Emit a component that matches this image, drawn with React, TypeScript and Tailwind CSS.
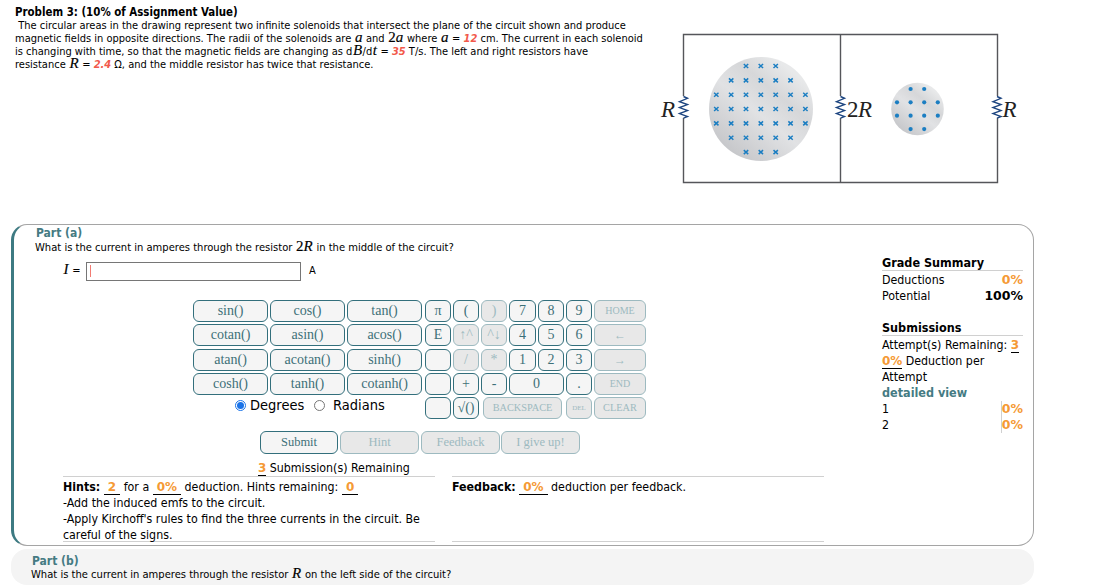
import React from "react";

function M({ children }: { children: React.ReactNode }) {
  return <span className="px-[0.5px] font-['Liberation_Serif',serif] text-[15px] leading-[0] italic [-webkit-text-stroke:0.15px_black]">{children}</span>;
}

function Red({ children }: { children: React.ReactNode }) {
  return <span className="font-bold italic text-[#f2594b]">{children}</span>;
}

function Amber({ children }: { children: React.ReactNode }) {
  return <span className="border-b border-black font-['DejaVu_Sans',sans-serif] text-[12px] leading-none font-bold tracking-[-0.1px] text-[#f59a35] [font-stretch:normal]">{children}</span>;
}

function Percent({ children, className = "text-[#f59a35]" }: { children: React.ReactNode; className?: string }) {
  return <b className={`font-['DejaVu_Sans',sans-serif] text-[12.5px] [font-stretch:normal] ${className}`}>{children}</b>;
}

function Key({ label = "", w = "w-[26px]", off = false, text = "text-[14px]" }: { label?: string; w?: string; off?: boolean; text?: string }) {
  return (
    <div
      className={`flex h-[22px] shrink-0 items-center justify-center overflow-hidden rounded-[6px] border whitespace-pre font-['Liberation_Serif',serif] leading-none ${w} ${text} ${
        off ? "border-[#9dbac0] bg-[#e8e8e8] text-[#9dbac0]" : "border-[#336f7c] bg-[#f5f5f5] text-[#3d7078]"
      }`}
    >
      {label}
    </div>
  );
}

function Resistor({ x }: { x: number }) {
  return <path d={`M${x} 66.5l4 1.8-8 3.3 8 3-8 3 8 3-8 3 8 3-4 1.6`} fill="none" stroke="#1d4580" strokeWidth="1.4" />;
}

const crosses = [
  [2, 3, 4],
  [1, 2, 3, 4, 5],
  [0, 1, 2, 3, 4, 5, 6],
  [0, 1, 2, 3, 4, 5, 6],
  [0, 1, 2, 3, 4, 5, 6],
  [1, 2, 3, 4, 5],
  [2, 3, 4],
];
const dots = [[1, 2], [0, 1, 2, 3], [0, 1, 2, 3], [1, 2]];

function Circuit() {
  return (
    <svg width="370" height="170" viewBox="0 0 370 170" className="block">
      <defs>
        <linearGradient id="ball" x1="0.1" y1="0.9" x2="0.75" y2="0.1">
          <stop offset="0" stopColor="#c3c4c7" />
          <stop offset="0.5" stopColor="#e1e2e4" />
          <stop offset="0.75" stopColor="#d6d7d9" />
          <stop offset="1" stopColor="#e8e9ea" />
        </linearGradient>
      </defs>
      <path
        d="M23.5 66V4.5H337.5V66M23.5 88V152.5H337.5V88M180.5 4.5V66M180.5 88V152.5"
        fill="none"
        stroke="#55565a"
        strokeWidth="1.4"
      />
      <Resistor x={23.5} />
      <Resistor x={180.5} />
      <Resistor x={337} />
      <circle cx="101" cy="79" r="52" fill="url(#ball)" />
      <circle cx="257.5" cy="79" r="26.3" fill="url(#ball)" />
      {crosses.map((row, r) =>
        row.map((c) => {
          const x = 56.3 + c * 14.85;
          const y = 36 + r * 14.35;
          return <path key={`${r}-${c}`} d={`M${x - 2.2} ${y - 2}l4.4 4m0-4l-4.4 4`} stroke="#1b7ec2" strokeWidth="1.5" />;
        }),
      )}
      {dots.map((row, r) =>
        row.map((c) => <circle key={`${r}-${c}`} cx={237 + c * 13.6} cy={59 + r * 13.35} r="2.1" fill="#1b7ec2" />),
      )}
      <g fontFamily="Liberation Serif, serif" fontSize="23" fill="#222">
        <text x="1" y="86.5" fontStyle="italic">R</text>
        <text x="187" y="86.5" textLength="25">2<tspan fontStyle="italic">R</tspan></text>
        <text x="342.5" y="86.5" fontStyle="italic">R</text>
      </g>
    </svg>
  );
}

const fn = [
  ["sin()", "cos()", "tan()"],
  ["cotan()", "asin()", "acos()"],
  ["atan()", "acotan()", "sinh()"],
  ["cosh()", "tanh()", "cotanh()"],
];

export default function App() {
  return (
    <div className="h-[588px] w-[1096px] overflow-hidden bg-white pl-[11px] font-['DejaVu_Sans_Condensed','DejaVu_Sans',sans-serif] text-[12.3px] text-black [font-stretch:condensed]">
      <header className="flex h-[224px] pl-[3px]">
        <div className="w-[646px] shrink-0 pt-[6px] pl-px text-[11px] leading-[13px] whitespace-pre [&>div]:h-[13px]">
          <div className="text-[11.4px]"><b>Problem 3: (10% of Assignment Value)</b></div>
          <div> The circular areas in the drawing represent two infinite solenoids that intersect the plane of the circuit shown and produce</div>
          <div>magnetic fields in opposite directions. The radii of the solenoids are <M>a</M> and <M><span className="not-italic">2</span>a</M> where <M>a</M> = <Red>12</Red> cm. The current in each solenoid</div>
          <div>is changing with time, so that the magnetic fields are changing as d<M>B</M>/d<M>t</M> = <Red>35</Red> T/s. The left and right resistors have</div>
          <div>resistance <M>R</M> = <Red>2.4</Red> Ω, and the middle resistor has twice that resistance.</div>
        </div>
        <div className="pt-[30px]"><Circuit /></div>
      </header>

      <section className="flex h-[322px] w-[1023px] rounded-[16px] border border-l-[3px] border-[#a5a5a5] border-l-[#3d7a82] pl-px whitespace-pre">
        <div className="w-[868px] shrink-0 pt-[1px]">
          <div className="ml-[21px] h-[15px] text-[12px] leading-[15px] font-bold text-[#457b83]">Part (a)</div>
          <div className="ml-[20px] h-[15px] text-[11.1px] leading-[13px]">What is the current in amperes through the resistor <M><span className="not-italic">2</span>R</M> in the middle of the circuit?</div>
          <div className="mt-[5px] ml-[48px] flex h-[20px] items-center">
            <span className="w-[23px] text-[11px]"><M>I</M> =</span>
            <div className="flex h-[19px] w-[215px] items-center border border-[#767676] pl-[3px]"><span className="h-[12px] w-px bg-[#f27b72]" /></div>
            <span className="ml-[8px] text-[11px]">A</span>
          </div>

          <div className="mt-[19px] ml-[178px] flex gap-[3px]">
            <div className="w-[229px]">
              <div className="flex flex-col gap-[2.3px]">
                {fn.map((row) => (
                  <div key={row[0]} className="flex gap-[2px]">
                    {row.map((f) => <Key key={f} label={f} w="w-[75px]" />)}
                  </div>
                ))}
              </div>
              <div className="mt-[2px] ml-[42px] flex h-[18px] items-center text-[14.5px]">
                <span className="flex size-[11px] items-center justify-center rounded-full border border-[#1a73e8]"><span className="size-[7px] rounded-full bg-[#1a73e8]" /></span>
                <span className="ml-[4px] w-[64px]">Degrees</span>
                <span className="size-[11px] rounded-full border border-[#767676]" />
                <span className="ml-[8px]">Radians</span>
              </div>
            </div>
            <div className="flex flex-col gap-[2.3px] [&>div]:flex [&>div]:gap-[2px]">
              <div><Key label="π" /><Key label="(" /><Key label=")" off /><Key label="7" w="w-[27px]" /><Key label="8" /><Key label="9" /><Key label="HOME" off w="w-[52px]" text="text-[10px]" /></div>
              <div><Key label="E" /><Key label="↑^" off /><Key label="^↓" off /><Key label="4" w="w-[27px]" /><Key label="5" /><Key label="6" /><Key label="←" off w="w-[52px]" text="text-[12px]" /></div>
              <div><Key /><Key label="/" off /><Key label="*" off /><Key label="1" w="w-[27px]" /><Key label="2" /><Key label="3" /><Key label="→" off w="w-[52px]" text="text-[12px]" /></div>
              <div><Key /><Key label="+" /><Key label="-" /><Key label="0" w="w-[55px]" /><Key label="." /><Key label="END" off w="w-[52px]" text="text-[10px]" /></div>
              <div><Key /><Key label="√()" /><Key label="BACKSPACE" off w="ml-[2px] w-[79px]" text="text-[10.3px]" /><Key label="DEL" off w="ml-[2px] w-[26px]" text="text-[7px]" /><Key label="CLEAR" off w="w-[52px]" text="text-[10.3px]" /></div>
            </div>
          </div>

          <div className="mt-[12px] ml-[245px] flex gap-[2px] [&>div]:h-[23px]">
            <Key label="Submit" w="w-[78px]" text="text-[12.5px]" />
            <Key label="Hint" off w="w-[79px]" text="text-[12.5px]" />
            <Key label="Feedback" off w="w-[79px]" text="text-[12.5px]" />
            <Key label="I give up!" off w="-ml-px w-[79px]" text="text-[12.5px]" />
          </div>
          <div className="mt-[7px] ml-[243px] h-[15px] leading-[14px]"><Amber>3</Amber> Submission(s) Remaining</div>

          <div className="ml-[48px] flex gap-[17px] leading-4">
            <div className="h-[66px] w-[372px] border-y border-[#d0d0d0] pt-[2px] [&>div]:h-4">
              <div><b>Hints:</b> <Amber> 2 </Amber> for a <Amber> 0% </Amber> deduction. Hints remaining: <Amber> 0 </Amber></div>
              <div>-Add the induced emfs to the circuit.</div>
              <div>-Apply Kirchoff's rules to find the three currents in the circuit. Be</div>
              <div>careful of the signs.</div>
            </div>
            <div className="h-[66px] w-[372px] border-y border-[#d0d0d0] pt-[2px]">
              <b>Feedback:</b> <Amber> 0% </Amber> deduction per feedback.
            </div>
          </div>
        </div>

        <aside className="mt-[30px] -ml-px w-[141px] leading-4">
          <div className="h-[16px] border-b border-[#d0d0d0] text-[12.5px] leading-[16px] font-bold">Grade Summary</div>
          <div className="h-px" />
          <div className="flex h-4 justify-between"><span>Deductions</span><Percent>0%</Percent></div>
          <div className="flex h-4 justify-between"><span>Potential</span><Percent className="text-black">100%</Percent></div>
          <div className="mt-4 h-[16px] border-b border-[#d0d0d0] text-[12.5px] font-bold">Submissions</div>
          <div className="mt-px h-4">Attempt(s) Remaining: <Amber>3</Amber></div>
          <div className="h-4"><Amber>0%</Amber> Deduction per</div>
          <div className="h-4">Attempt</div>
          <div className="h-4 text-[12.5px] font-bold text-[#457b83]">detailed view</div>
          <div className="flex h-4 justify-between"><span>1</span><Percent className="border-l border-[#d0d0d0] text-[#f59a35]">0%</Percent></div>
          <div className="flex h-4 justify-between"><span>2</span><Percent className="border-l border-[#d0d0d0] text-[#f59a35]">0%</Percent></div>
        </aside>
      </section>

      <section className="mt-[3px] h-[36px] w-[1023px] rounded-[16px] bg-[#f4f4f4] pt-[5px] pl-[20px] whitespace-pre">
        <div className="ml-px h-[14px] text-[12px] leading-[15px] font-bold text-[#457b83]">Part (b)</div>
        <div className="h-[13px] text-[11.1px] leading-[13px]">What is the current in amperes through the resistor <M>R</M> on the left side of the circuit?</div>
      </section>
    </div>
  );
}
